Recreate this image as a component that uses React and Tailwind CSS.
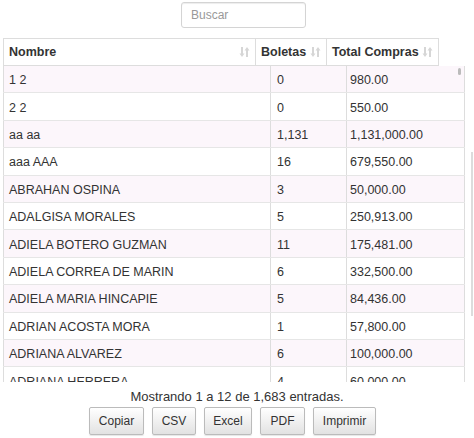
import React from 'react';

const rows = [
    ['1 2', '0', '980.00'],
    ['2 2', '0', '550.00'],
    ['aa aa', '1,131', '1,131,000.00'],
    ['aaa AAA', '16', '679,550.00'],
    ['ABRAHAN OSPINA', '3', '50,000.00'],
    ['ADALGISA MORALES', '5', '250,913.00'],
    ['ADIELA BOTERO GUZMAN', '11', '175,481.00'],
    ['ADIELA CORREA DE MARIN', '6', '332,500.00'],
    ['ADIELA MARIA HINCAPIE', '5', '84,436.00'],
    ['ADRIAN ACOSTA MORA', '1', '57,800.00'],
    ['ADRIANA ALVAREZ', '6', '100,000.00'],
    ['ADRIANA HERRERA', '4', '60,000.00'],
];

function SortIcon() {
    return (
        <svg width="11" height="12" viewBox="0 0 11 12" className="shrink-0">
            {/* down arrow */}
            <path d="M3 1v8" stroke="#d6d6d6" strokeWidth="2" />
            <path d="M0.5 7.5L3 11l2.5-3.5z" fill="#d6d6d6" />
            {/* up arrow */}
            <path d="M8 3v8" stroke="#d6d6d6" strokeWidth="2" />
            <path d="M5.5 4.5L8 1l2.5 3.5z" fill="#d6d6d6" />
        </svg>
    );
}

function HeadCell({ label, width, last }) {
    return (
        <div
            className={`flex items-center justify-between pl-[5px] pr-[5px] border-l border-[#dddddd] ${last ? 'border-r' : ''}`}
            style={{ width }}
        >
            <span className="font-bold text-[#333]">{label}</span>
            <SortIcon />
        </div>
    );
}

export default function App() {
    return (
        <div className="relative w-[474px] h-[438px] bg-white overflow-hidden text-[12.5px] text-[#333] font-['Liberation_Sans',Arial,sans-serif]">
            {/* Search */}
            <div className="pt-[2px] pl-[181px]">
                <input
                    placeholder="Buscar"
                    className="w-[125px] h-[26px] border border-[#d4d4d4] rounded-[3px] px-[9px] text-[12px] placeholder:text-[#999] shadow-[inset_0_1px_1px_rgba(0,0,0,0.075)] outline-none"
                />
            </div>

            {/* Header table */}
            <div className="mt-[10px] ml-[3px] w-[436px] h-[28px] flex border-t border-b border-[#dddddd] bg-white">
                <HeadCell label="Nombre" width={252} />
                <HeadCell label="Boletas" width={71} />
                <HeadCell label="Total Compras" width={113} last />
            </div>

            {/* Body (scroll area) */}
            <div className="relative ml-[3px] w-[462px] h-[316px] overflow-hidden">
                {rows.map((r, i) => (
                    <div
                        key={i}
                        className={`flex h-[27.4px] pt-[3px] border-b border-[#e6e6e6] ${i % 2 === 0 ? 'bg-[#fcf6fb]' : 'bg-white'}`}
                    >
                        <div className="w-[267px] flex items-center pl-[5px] border-l border-[#dddddd] -mt-[3px] pt-[3px]">{r[0]}</div>
                        <div className="w-[76px] flex items-center pl-[6px] border-l border-[#dddddd] -mt-[3px] pt-[3px]">{r[1]}</div>
                        <div className="w-[119px] flex items-center pl-[3px] border-l border-r border-[#dddddd] -mt-[3px] pt-[3px]">{r[2]}</div>
                    </div>
                ))}
                {/* tiny scroll thumb */}
                <div className="absolute top-[2px] right-[4px] w-[3px] h-[7px] rounded-full bg-[#bbbbbb]" />
            </div>

            {/* Info + buttons */}
            <div className="mt-[7px] text-center text-[13px] leading-[15px] text-[#333]">
                Mostrando 1 a 12 de 1,683 entradas.
            </div>
            <div className="mt-[3px] ml-[89px] flex gap-[8px]">
                {['Copiar', 'CSV', 'Excel', 'PDF', 'Imprimir'].map((b, i) => (
                    <button
                        key={b}
                        className={`h-[28px] ${['w-[55px]', 'w-[44px]', 'w-[48px]', 'w-[45px]', 'w-[63px]'][i]} text-[12px] text-[#333] border border-[#bbbbbb] rounded-[2px] bg-gradient-to-b from-white to-[#e2e2e2] shadow-[0_1px_1px_rgba(0,0,0,0.1)]`}
                    >
                        {b}
                    </button>
                ))}
            </div>

            {/* outer scrollbar trace */}
            <div className="absolute left-[471px] top-[152px] w-[2px] h-[164px] bg-[#dcdcdc]" />
        </div>
    );
}
